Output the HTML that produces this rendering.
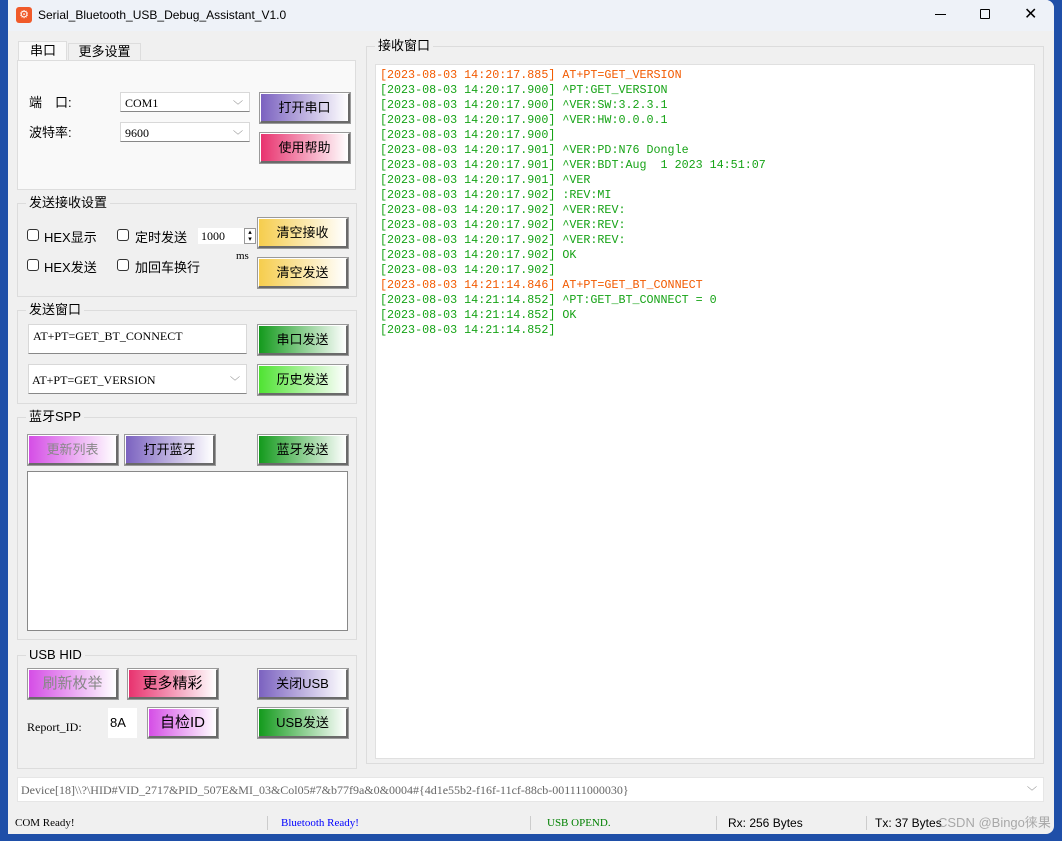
<!DOCTYPE html>
<html><head><meta charset="utf-8"><style>
*{margin:0;padding:0;box-sizing:border-box}
body{width:1062px;height:841px;background:#1f4fa8;position:relative;overflow:hidden;font-family:"Liberation Sans","Noto Sans CJK SC",sans-serif;font-size:13px;color:#000}
.win{position:absolute;left:8px;top:0;width:1046px;height:834px;background:#f0f0f0;border-radius:0 8px 8px 0;overflow:hidden}
.tb{position:absolute;left:0;top:0;width:100%;height:31px;background:#eef2f8}
.a{position:absolute}
.grp{position:absolute;border:1px solid #dcdcdc}
.gl{position:absolute;background:#f0f0f0;padding:0 3px;top:-9px;left:8px;font-size:13px;line-height:16px}
.btn{position:absolute;width:90px;height:30px;border:1px solid #fff;border-right:2px solid #6a6a6a;border-bottom:2px solid #6a6a6a;outline:1px solid #9a9a9a;text-align:center;line-height:27px;font-size:13px}
.pur{background:linear-gradient(90deg,#7b62c0,#fff)}
.pink{background:linear-gradient(90deg,#e8336f,#fff)}
.yel{background:linear-gradient(90deg,#f6cd4d,#fff)}
.grn{background:linear-gradient(90deg,#139a1c,#fff)}
.lg{background:linear-gradient(90deg,#4fe332,#fff)}
.mag{background:linear-gradient(90deg,#d54ee6,#fff)}
.in{position:absolute;background:#fff;border:1px solid #d8d8d8;border-bottom:1px solid #888;font-family:"Liberation Serif","Noto Serif CJK SC",serif;font-size:12px}
.cb{position:absolute;width:12px;height:12px;border:1px solid #333;border-radius:3px;background:#fff}
.mono{font-family:"Liberation Mono","Noto Sans CJK SC",monospace}
.log div{height:15px;line-height:15px;white-space:pre}
.o{color:#f25a00}.g{color:#16a316}
.chev{position:absolute;right:6px;top:4px;font-size:10px;color:#666}
</style></head><body>
<div class="win">
<div class="tb">
 <div class="a" style="left:8px;top:7px;width:16px;height:16px;background:#f05a2a;border-radius:3px;color:#fff;font-size:11px;text-align:center;line-height:16px">⚙</div>
 <div class="a" style="left:30px;top:8px;font-size:12px">Serial_Bluetooth_USB_Debug_Assistant_V1.0</div>
 <div class="a" style="left:927px;top:14px;width:11px;height:1px;background:#000"></div>
 <div class="a" style="left:972px;top:9px;width:10px;height:10px;border:1px solid #000;border-radius:1px"></div>
 <div class="a" style="left:1016px;top:4px;font-size:16px">✕</div>
</div>
<!-- tabs -->
<div class="a" style="left:10px;top:41px;width:49px;height:20px;background:#f9f9f9;border:1px solid #ddd;border-bottom:none;padding-left:11px;line-height:18px">串口</div>
<div class="a" style="left:60px;top:43px;width:73px;height:18px;background:#f0f0f0;border:1px solid #ddd;border-bottom:none;text-align:center;line-height:16px">更多设置</div>
<div class="a" style="left:9px;top:60px;width:339px;height:130px;background:#f9f9f9;border:1px solid #ddd"></div>
<div class="a" style="left:21px;top:92px">端　口:</div>
<div class="a" style="left:21px;top:122px">波特率:</div>
<div class="in" style="left:112px;top:92px;width:130px;height:20px;padding:3px 4px">COM1<span class="chev">﹀</span></div>
<div class="in" style="left:112px;top:122px;width:130px;height:20px;padding:3px 4px">9600<span class="chev">﹀</span></div>
<div class="btn pur" style="left:252px;top:93px">打开串口</div>
<div class="btn pink" style="left:252px;top:133px">使用帮助</div>

<div class="grp" style="left:9px;top:203px;width:340px;height:94px"><div class="gl">发送接收设置</div></div>
<div class="cb" style="left:19px;top:229px"></div><div class="a" style="left:36px;top:227px">HEX显示</div>
<div class="cb" style="left:109px;top:229px"></div><div class="a" style="left:127px;top:227px">定时发送</div>
<div class="in" style="left:190px;top:228px;width:58px;height:16px;border:none;padding:1px 3px;line-height:14px">1000<span class="a" style="right:0;top:0;width:12px;height:16px;border:1px solid #999;font-size:7px;line-height:7px;text-align:center">▴<br>▾</span></div>
<div class="cb" style="left:19px;top:259px"></div><div class="a" style="left:36px;top:257px">HEX发送</div>
<div class="cb" style="left:109px;top:259px"></div><div class="a" style="left:127px;top:257px">加回车换行</div>
<div class="a" style="left:228px;top:250px;font-size:11px;font-family:'Liberation Serif',serif">ms</div>
<div class="btn yel" style="left:250px;top:218px">清空接收</div>
<div class="btn yel" style="left:250px;top:258px">清空发送</div>

<div class="grp" style="left:9px;top:310px;width:340px;height:94px"><div class="gl">发送窗口</div></div>
<div class="in" style="left:20px;top:324px;width:219px;height:30px;padding:4px 4px">AT+PT=GET_BT_CONNECT</div>
<div class="in" style="left:20px;top:364px;width:219px;height:30px;padding:8px 3px">AT+PT=GET_VERSION<span class="chev" style="top:8px">﹀</span></div>
<div class="btn grn" style="left:250px;top:325px">串口发送</div>
<div class="btn lg" style="left:250px;top:365px">历史发送</div>

<div class="grp" style="left:9px;top:417px;width:340px;height:223px"><div class="gl">蓝牙SPP</div></div>
<div class="btn mag" style="left:20px;top:435px;color:#888">更新列表</div>
<div class="btn pur" style="left:117px;top:435px">打开蓝牙</div>
<div class="btn grn" style="left:250px;top:435px">蓝牙发送</div>
<div class="a" style="left:19px;top:471px;width:321px;height:160px;background:#fff;border:1px solid #888"></div>

<div class="grp" style="left:9px;top:655px;width:340px;height:114px"><div class="gl">USB HID</div></div>
<div class="btn mag" style="left:20px;top:669px;color:#888;font-size:15px">刷新枚举</div>
<div class="btn pink" style="left:120px;top:669px;font-size:15px">更多精彩</div>
<div class="btn pur" style="left:250px;top:669px">关闭USB</div>
<div class="a" style="left:19px;top:720px;font-family:'Liberation Serif',serif;font-size:12px">Report_ID:</div>
<div class="a" style="left:100px;top:708px;width:29px;height:30px;background:#fff;padding:7px 2px;font-size:13px">8A</div>
<div class="btn mag" style="left:140px;top:708px;width:70px;font-size:15px">自检ID</div>
<div class="btn grn" style="left:250px;top:708px">USB发送</div>

<div class="grp" style="left:358px;top:46px;width:678px;height:718px"><div class="gl">接收窗口</div></div>
<div class="a log mono" style="left:367px;top:64px;width:660px;height:695px;background:#fff;border:1px solid #e0e0e0;padding:3px 4px;font-size:11.7px">
<div class="o">[2023-08-03 14:20:17.885] AT+PT=GET_VERSION</div>
<div class="g">[2023-08-03 14:20:17.900] ^PT:GET_VERSION</div>
<div class="g">[2023-08-03 14:20:17.900] ^VER:SW:3.2.3.1</div>
<div class="g">[2023-08-03 14:20:17.900] ^VER:HW:0.0.0.1</div>
<div class="g">[2023-08-03 14:20:17.900]</div>
<div class="g">[2023-08-03 14:20:17.901] ^VER:PD:N76 Dongle</div>
<div class="g">[2023-08-03 14:20:17.901] ^VER:BDT:Aug  1 2023 14:51:07</div>
<div class="g">[2023-08-03 14:20:17.901] ^VER</div>
<div class="g">[2023-08-03 14:20:17.902] :REV:MI</div>
<div class="g">[2023-08-03 14:20:17.902] ^VER:REV:</div>
<div class="g">[2023-08-03 14:20:17.902] ^VER:REV:</div>
<div class="g">[2023-08-03 14:20:17.902] ^VER:REV:</div>
<div class="g">[2023-08-03 14:20:17.902] OK</div>
<div class="g">[2023-08-03 14:20:17.902]</div>
<div class="o">[2023-08-03 14:21:14.846] AT+PT=GET_BT_CONNECT</div>
<div class="g">[2023-08-03 14:21:14.852] ^PT:GET_BT_CONNECT = 0</div>
<div class="g">[2023-08-03 14:21:14.852] OK</div>
<div class="g">[2023-08-03 14:21:14.852]</div>
</div>

<div class="in" style="left:9px;top:777px;width:1027px;height:25px;padding:5px 3px;color:#666;border-color:#e6e6e6">Device[18]\\?\HID#VID_2717&amp;PID_507E&amp;MI_03&amp;Col05#7&amp;b77f9a&amp;0&amp;0004#{4d1e55b2-f16f-11cf-88cb-001111000030}<span class="chev" style="top:5px">﹀</span></div>

<div class="a" style="left:0;top:812px;width:100%;height:22px;font-family:'Liberation Serif',serif;font-size:11px;line-height:22px">
 <span class="a" style="left:7px">COM Ready!</span>
 <span class="a" style="left:259px;top:4px;height:14px;border-left:1px solid #ccc"></span>
 <span class="a" style="left:273px;color:#0000ff">Bluetooth Ready!</span>
 <span class="a" style="left:522px;top:4px;height:14px;border-left:1px solid #ccc"></span>
 <span class="a" style="left:539px;color:#008000">USB OPEND.</span>
 <span class="a" style="left:708px;top:4px;height:14px;border-left:1px solid #ccc"></span>
 <span class="a" style="left:720px;font-family:'Liberation Sans',sans-serif;font-size:12px">Rx: 256 Bytes</span>
 <span class="a" style="left:858px;top:4px;height:14px;border-left:1px solid #ccc"></span>
 <span class="a" style="left:867px;font-family:'Liberation Sans',sans-serif;font-size:12px">Tx: 37 Bytes</span>
 <span class="a" style="left:930px;font-family:'Liberation Sans','Noto Sans CJK SC',sans-serif;font-size:13px;color:rgba(120,120,120,.6)">CSDN @Bingo徕果</span>
</div>
</div>
</body></html>
